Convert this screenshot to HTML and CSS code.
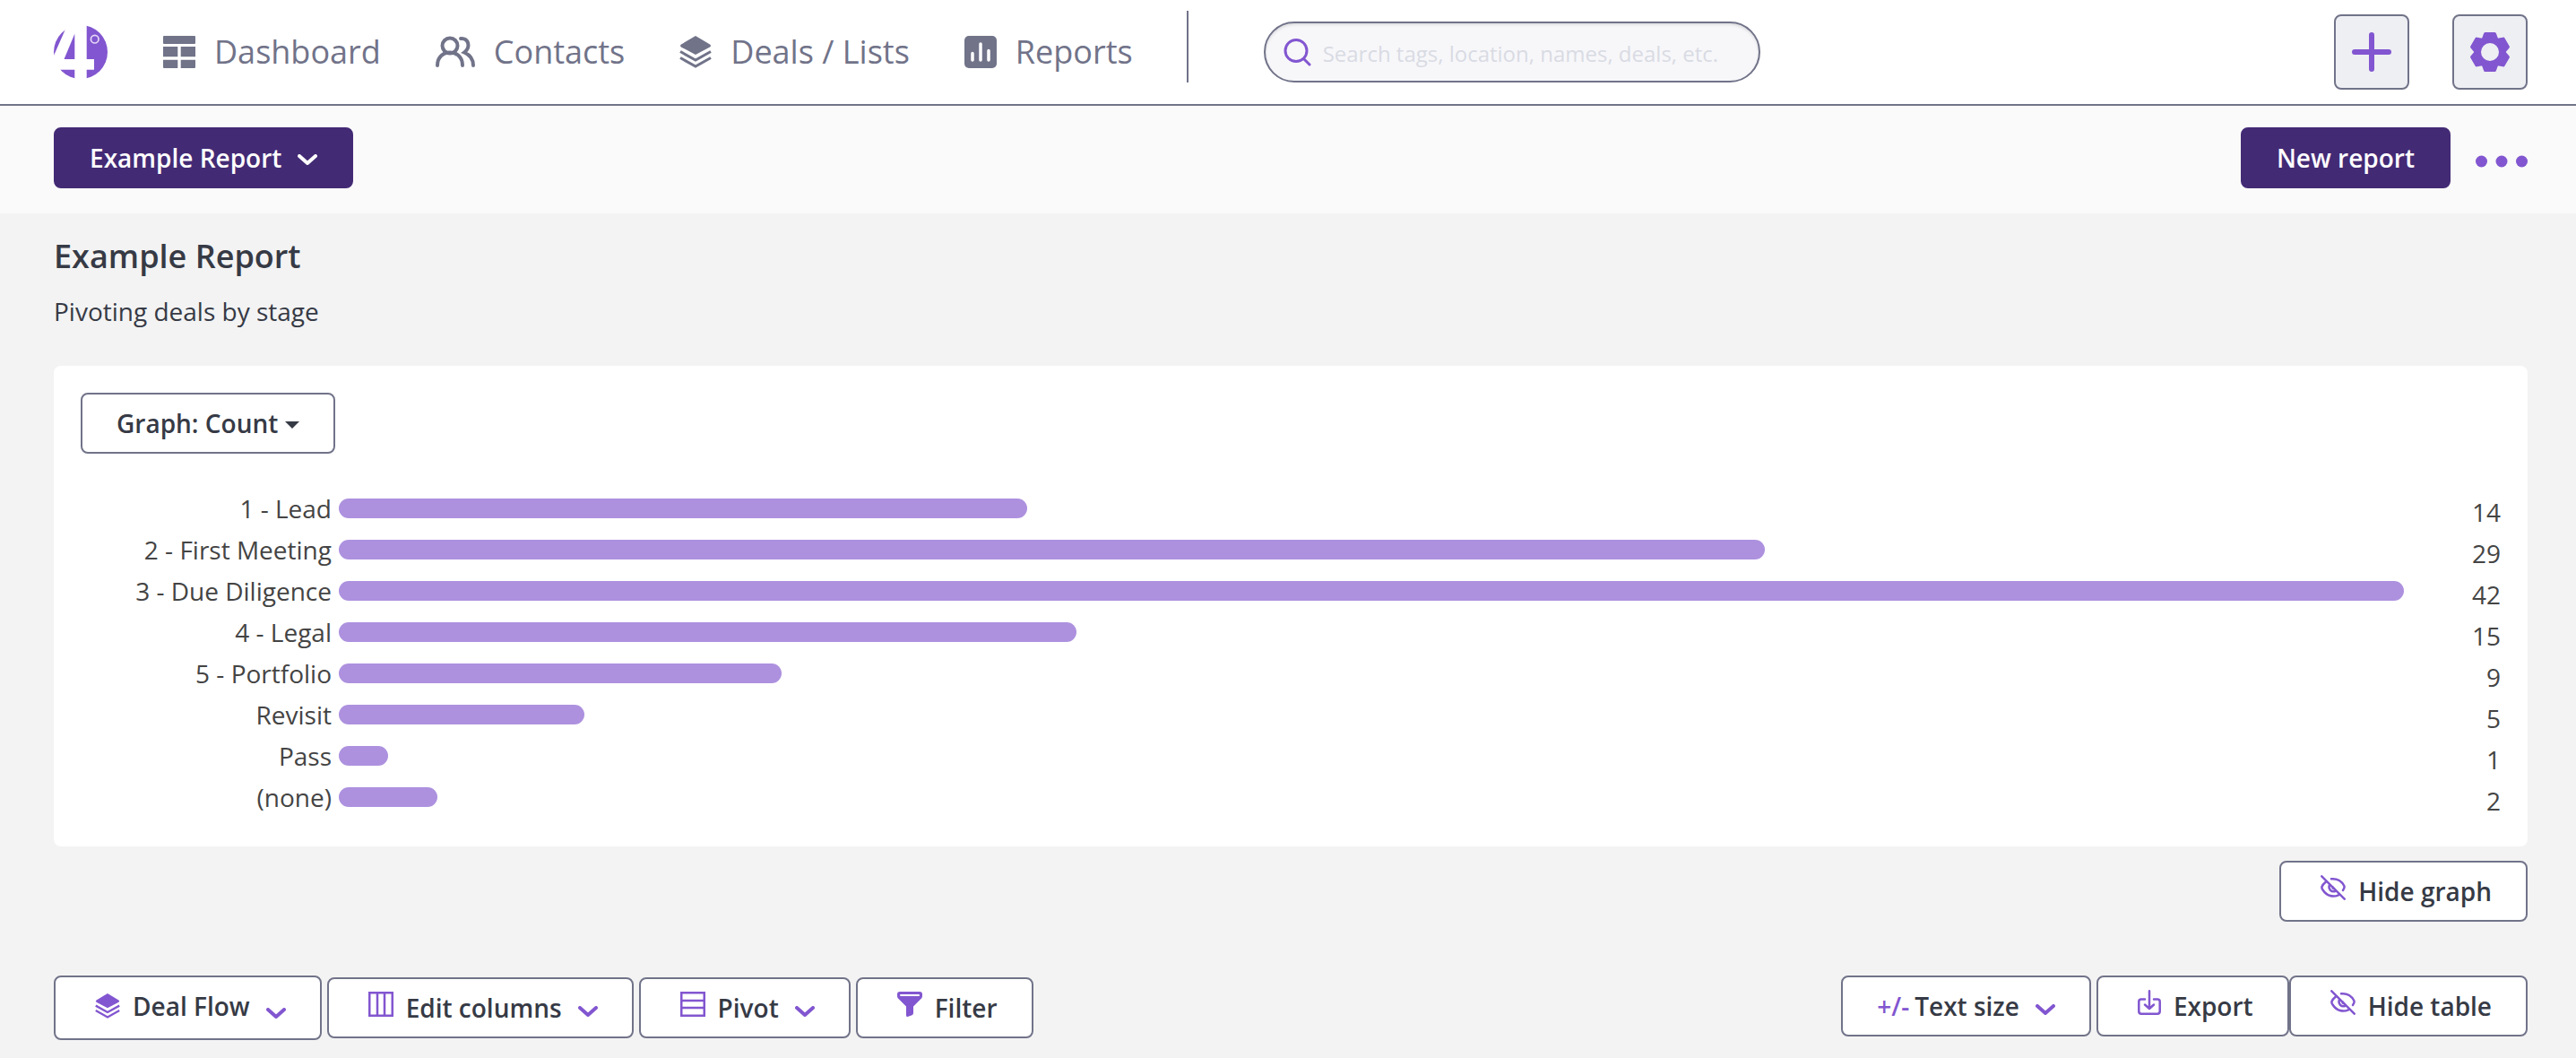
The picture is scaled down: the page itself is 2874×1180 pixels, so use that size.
FILE: index.html
```html
<!DOCTYPE html>
<html lang="en">
<head>
  <meta charset="UTF-8" />
  <meta name="viewport" content="width=device-width, initial-scale=1.0"/>
  <title>Example Report</title>
  <link rel="stylesheet" href="styles.css">
</head>
<body>

<!-- shared icons -->
<svg class="sprite" aria-hidden="true">
  <symbol id="i-layers" viewBox="0 0 36 36">
    <path fill="currentColor" d="M18 0 34 9.500Q36 11 34 12.500L18 21 2 12.500Q0 11 2 9.500Z"/>
    <path fill="none" stroke="currentColor" stroke-width="3" d="M1 17.500 18 27 35 17.500M1 24.500 18 34 35 24.500"/>
  </symbol>
  <symbol id="i-chevron" viewBox="0 0 22 12">
    <path fill="none" stroke="currentColor" stroke-width="4" stroke-linecap="round" stroke-linejoin="round" d="M2 2 11 10 20 2"/>
  </symbol>
  <symbol id="i-eye-off" viewBox="0 0 28 28">
    <g fill="none" stroke="currentColor" stroke-width="2.500" stroke-linecap="round">
      <path d="M1.300 1.300 26.700 26.700"/>
      <path d="M12 4.300C19 3.500 24 7.500 26.300 12Q27.200 14 25 17"/>
      <path d="M6 7.500C3.500 9.500 2 11.500 1.500 13Q1 14.500 2.500 16.500C7 23.500 14 25 20 22.300"/>
      <path d="M9.800 11.500C8.500 15.500 12 19.500 16.300 18"/>
      <path d="M13.500 13.500Q13.500 15 15 15"/>
    </g>
  </symbol>
</svg>

<header class="topbar">
  <a class="logo" href="#" aria-label="Home">
    <svg width="60" height="60" viewBox="0 0 60 60">
      <circle cx="30" cy="30" r="30" fill="#8256d0"/>
      <path fill="#fff" d="M15 0H36.700V38H45V49.700H36.700V60H23.300V49.700H0V34Z"/>
      <path fill="#8256d0" d="M23.300 9.700V38H11.500Z"/>
      <circle cx="45.700" cy="15.700" r="4.300" fill="none" stroke="#e4d8f7" stroke-width="1.700"/>
    </svg>
  </a>
  <nav class="nav">
    <a href="#">
      <svg width="36" height="36" viewBox="0 0 36 36" fill="currentColor">
        <rect width="36" height="9" rx="1"/>
        <path d="M0 12H16.300V23.300H0ZM19.700 12H36V23.300H19.700Z"/>
        <path d="M0 26.700H16.300V36H1Q0 36 0 35ZM19.700 26.700H36V35Q36 36 35 36H19.700Z"/>
      </svg>
      Dashboard
    </a>
    <a href="#">
      <svg width="44" height="36" viewBox="0 0 44 36" fill="none" stroke="currentColor" stroke-width="4" stroke-linecap="round">
        <circle cx="16" cy="11" r="8.500"/>
        <path d="M2 33C2 13.500 30 13.500 30 33"/>
        <path d="M28 3C37 2 39.500 13 32 18.500C39 21.500 42 26.500 42 33"/>
      </svg>
      Contacts
    </a>
    <a href="#">
      <svg width="36" height="36"><use href="#i-layers"/></svg>
      Deals / Lists
    </a>
    <a href="#">
      <svg width="36" height="36" viewBox="0 0 36 36">
        <rect width="36" height="36" rx="5" fill="currentColor"/>
        <path stroke="#fff" stroke-width="3.500" stroke-linecap="round" d="M9 19.500V27M18 9V27M27 16.500V27"/>
      </svg>
      Reports
    </a>
  </nav>
  <div class="divider"></div>
  <form class="search" role="search">
    <svg width="32" height="32" viewBox="0 0 32 32" fill="none" stroke="currentColor" stroke-width="3" stroke-linecap="round">
      <circle cx="14" cy="14.500" r="12"/>
      <path d="M23 24 29 30"/>
    </svg>
    <input type="search" aria-label="Search" placeholder="Search tags, location, names, deals, etc.">
  </form>
  <div class="topbar-actions">
    <button class="icon-btn" type="button" aria-label="Add">
      <svg width="44" height="44" viewBox="0 0 44 44" stroke="currentColor" stroke-width="6" stroke-linecap="round">
        <path d="M22 3V41M3 22H41"/>
      </svg>
    </button>
    <button class="icon-btn" type="button" aria-label="Settings">
      <svg width="44" height="44" viewBox="-22 -22 44 44" fill="currentColor">
        <circle r="17.500"/>
        <path id="teeth" d="M-5.500-22H5.500Q6.500-22 7-20.500L9-15V15L7 20.500Q6.500 22 5.500 22H-5.500Q-6.500 22-7 20.500L-9 15V-15L-7-20.500Q-6.500-22-5.500-22Z"/>
        <use href="#teeth" transform="rotate(60)"/>
        <use href="#teeth" transform="rotate(120)"/>
        <circle r="10" fill="#eeeff3"/>
      </svg>
    </button>
  </div>
</header>

<div class="subbar">
  <button class="btn btn-primary" type="button" aria-haspopup="true">
    Example Report
    <svg class="chevron" width="22" height="12"><use href="#i-chevron"/></svg>
  </button>
  <div class="subbar-actions">
    <button class="btn btn-primary" type="button">New report</button>
    <button class="more" type="button" aria-label="More options">
      <svg width="58" height="14" viewBox="0 0 58 14" fill="currentColor">
        <circle cx="6.500" cy="7" r="6.500"/>
        <circle cx="29" cy="7" r="6.500"/>
        <circle cx="51.500" cy="7" r="6.500"/>
      </svg>
    </button>
  </div>
</div>

<main>
  <h1>Example Report</h1>
  <p class="description">Pivoting deals by stage</p>

  <section class="panel">
    <button class="btn" type="button" aria-haspopup="true">
      Graph: Count
      <span class="caret"></span>
    </button>
    <ul class="graph">
      <li><span class="label">1 - Lead</span><span class="track"><span class="bar" style="width: 33.33%"></span></span><span class="value">14</span></li>
      <li><span class="label">2 - First Meeting</span><span class="track"><span class="bar" style="width: 69.05%"></span></span><span class="value">29</span></li>
      <li><span class="label">3 - Due Diligence</span><span class="track"><span class="bar" style="width: 100%"></span></span><span class="value">42</span></li>
      <li><span class="label">4 - Legal</span><span class="track"><span class="bar" style="width: 35.71%"></span></span><span class="value">15</span></li>
      <li><span class="label">5 - Portfolio</span><span class="track"><span class="bar" style="width: 21.43%"></span></span><span class="value">9</span></li>
      <li><span class="label">Revisit</span><span class="track"><span class="bar" style="width: 11.9%"></span></span><span class="value">5</span></li>
      <li><span class="label">Pass</span><span class="track"><span class="bar" style="width: 2.38%"></span></span><span class="value">1</span></li>
      <li><span class="label">(none)</span><span class="track"><span class="bar" style="width: 4.76%"></span></span><span class="value">2</span></li>
    </ul>
  </section>

  <div class="panel-footer">
    <button class="btn" type="button">
      <svg class="icon" width="28" height="28"><use href="#i-eye-off"/></svg>
      Hide graph
    </button>
  </div>

  <div class="toolbar">
    <div class="group">
      <button class="btn btn-list" type="button" aria-haspopup="true">
        <svg class="icon" width="28" height="28"><use href="#i-layers"/></svg>
        Deal Flow
        <svg class="chevron" width="22" height="12"><use href="#i-chevron"/></svg>
      </button>
      <button class="btn" type="button" aria-haspopup="true">
        <svg class="icon" width="28" height="28" viewBox="0 0 28 28" fill="none" stroke="currentColor" stroke-width="2.500">
          <path d="M1.250 1.250H26.750V26.750H1.250ZM10 1V27M18 1V27"/>
        </svg>
        Edit columns
        <svg class="chevron" width="22" height="12"><use href="#i-chevron"/></svg>
      </button>
      <button class="btn" type="button" aria-haspopup="true">
        <svg class="icon" width="28" height="28" viewBox="0 0 28 28" fill="none" stroke="currentColor" stroke-width="2.500">
          <path d="M1.250 1.250H26.750V26.750H1.250ZM1 10H27M1 18H27"/>
        </svg>
        Pivot
        <svg class="chevron" width="22" height="12"><use href="#i-chevron"/></svg>
      </button>
      <button class="btn" type="button">
        <svg class="icon" width="28" height="28" viewBox="0 0 28 28">
          <path fill="currentColor" d="M3 0H25Q28 0 28 3V5Q28 7 26 8.500L18 16.500V24Q18 25.500 16.500 26.200L11.500 28Q10 28 10 26.500V16.500L2 8.500Q0 7 0 5V3Q0 0 3 0Z"/>
          <path stroke="#fff" stroke-width="2" stroke-linecap="round" d="M4 4H24"/>
        </svg>
        Filter
      </button>
    </div>
    <div class="group">
      <button class="btn" type="button" aria-haspopup="true">
        <span class="plus-minus">+/-</span>
        Text size
        <svg class="chevron" width="22" height="12"><use href="#i-chevron"/></svg>
      </button>
      <div class="joined">
        <button class="btn" type="button">
          <svg class="icon" width="26" height="28" viewBox="0 0 26 28" fill="none" stroke="currentColor" stroke-width="2.500" stroke-linecap="round" stroke-linejoin="round">
            <path d="M8 10.500H4Q1.300 10.500 1.300 13V24Q1.300 26.700 4 26.700H22Q24.700 26.700 24.700 24V13Q24.700 10.500 22 10.500H18"/>
            <path d="M13 1.300V21M8 16.500 13 21 18 16.500"/>
          </svg>
          Export
        </button>
        <button class="btn" type="button">
          <svg class="icon" width="28" height="28"><use href="#i-eye-off"/></svg>
          Hide table
        </button>
      </div>
    </div>
  </div>
</main>

</body>
</html>
```
FILE: styles.css
```css
:root {
  --bg: #f3f3f3;
  --text: #363a45;
  --slate: #717389;
  --purple: #8256d0;
  --purple-dark: #432a75;
  --bar: #ad91df;
}

* {
  box-sizing: border-box;
}

body {
  margin: 0;
  font-family: "Open Sans", sans-serif;
  font-size: 28px;
  line-height: 38px;
  background: var(--bg);
  color: var(--text);
}

button, input {
  font: inherit;
}

button {
  cursor: pointer;
}

svg {
  flex-shrink: 0;
}

.sprite {
  display: none;
}

/* top navigation */
.topbar {
  display: flex;
  align-items: center;
  padding: 12px 54px 12px 60px;
  background: #fff;
  border-bottom: 2px solid var(--slate);
}

.logo {
  display: flex;
}

.nav {
  display: flex;
  gap: 61px;
  margin-left: 62px;
}

.nav a {
  display: flex;
  align-items: center;
  gap: 21px;
  color: var(--slate);
  font-size: 36px;
  line-height: 48px;
  text-decoration: none;
  white-space: nowrap;
}

.divider {
  align-self: flex-start;
  width: 2px;
  height: 80px;
  margin: 0 84px 0 60px;
  background: var(--slate);
}

.search {
  display: flex;
  align-items: center;
  width: 554px;
  height: 68px;
  padding: 0 20px;
  border: 2px solid var(--slate);
  border-radius: 34px;
  background: #f7f7fa;
  box-shadow: inset 0 2px 3px rgba(0,0,0,0.1);
  color: var(--purple);
}

.search input {
  flex: 1;
  min-width: 0;
  padding: 4px 0 0;
  margin-left: 12px;
  border: none;
  outline: none;
  background: none;
  color: var(--text);
  font-size: 24px;
}

.search input::placeholder {
  color: #d9dbe3;
  opacity: 1;
}

.topbar-actions {
  display: flex;
  gap: 48px;
  margin: 4px 0 4px auto;
}

.icon-btn {
  display: flex;
  align-items: center;
  justify-content: center;
  width: 84px;
  height: 84px;
  padding: 0;
  border: 2px solid var(--slate);
  border-radius: 8px;
  background: #eeeff3;
  color: var(--purple);
}

/* report switcher bar */
.subbar {
  display: flex;
  justify-content: space-between;
  padding: 24px 54px 28px 60px;
  background: #fafafa;
}

.subbar-actions {
  display: flex;
  align-items: center;
  gap: 28px;
}

.more {
  display: flex;
  padding: 8px 0 0;
  border: none;
  background: none;
  color: var(--purple);
}

/* buttons */
.btn {
  display: inline-flex;
  align-items: center;
  height: 68px;
  padding: 0 38px;
  border: 2px solid var(--slate);
  border-radius: 8px;
  background: #fff;
  color: var(--text);
  font-weight: 600;
  white-space: nowrap;
}

.btn-primary {
  border-color: var(--purple-dark);
  background: var(--purple-dark);
  color: #fff;
}

.icon {
  margin: 0 14px 8px 6px;
  color: var(--purple);
}

.chevron {
  margin: 4px 0 0 18px;
}

.toolbar .chevron {
  margin-top: 8px;
  color: var(--purple);
}

.btn-list {
  height: 72px;
  padding-bottom: 4px;
}

.btn-list .icon {
  margin-bottom: 0;
}

.toolbar .btn-list .chevron {
  margin-top: 16px;
}

.caret {
  margin: 4px 0 0 8px;
  border: 8px solid transparent;
  border-top-color: currentColor;
  border-bottom: none;
}

.plus-minus {
  margin-right: 6px;
  color: var(--purple);
}

/* report */
main {
  padding: 24px 54px 20px 60px;
}

h1 {
  margin: 0 0 18px;
  font-size: 36px;
  font-weight: 600;
  line-height: 48px;
}

.description {
  margin: 0 0 42px;
}

.panel {
  padding: 30px 30px 32px;
  border-radius: 8px;
  background: #fff;
}

.graph {
  margin: 38px 0 0;
  padding: 0;
  list-style: none;
  color: #444;
}

.graph li {
  display: grid;
  grid-template-columns: 280px 1fr 108px;
  align-items: center;
  height: 46px;
}

.label,
.value {
  text-align: right;
}

.value {
  padding-top: 8px;
}

.track {
  margin-left: 8px;
}

.bar {
  display: block;
  height: 22px;
  border-radius: 11px;
  background: var(--bar);
}

.panel-footer {
  display: flex;
  justify-content: flex-end;
  margin: 16px 0 60px;
}

.toolbar {
  display: flex;
  justify-content: space-between;
}

.group {
  display: flex;
  align-items: center;
  gap: 6px;
}

.group:last-child {
  align-items: flex-start;
}

.joined {
  display: flex;
}
```
